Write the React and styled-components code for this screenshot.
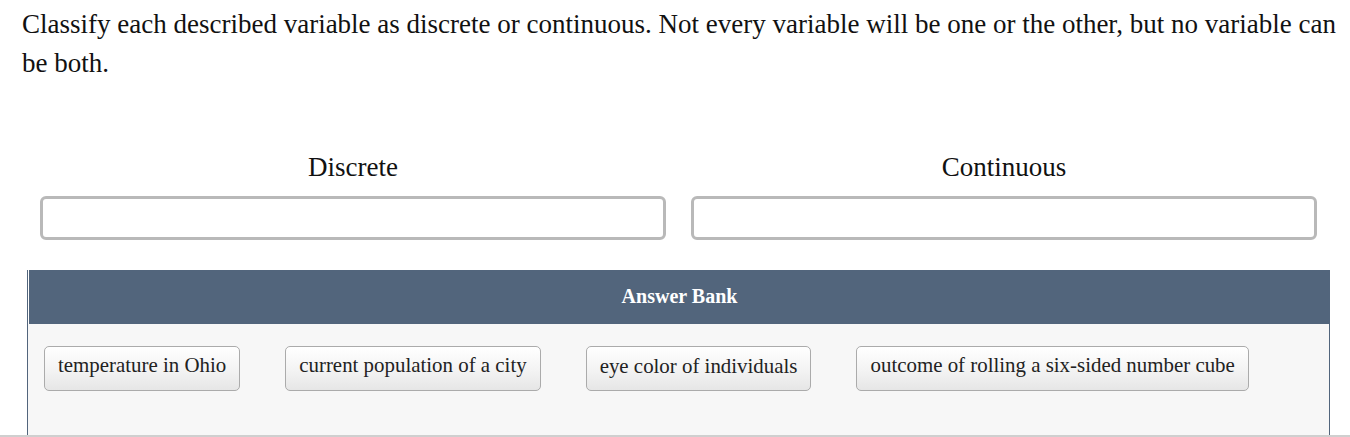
import React from "react";
import styled, { createGlobalStyle } from "styled-components";

const Global = createGlobalStyle`
  html, body { margin: 0; padding: 0; background: #fff; }
  body { font-family: "Liberation Serif", "Times New Roman", serif; color: #111; }
`;

const Page = styled.div`
  width: 1350px;
  height: 437px;
  overflow: hidden;
  display: flex;
  flex-direction: column;
`;

const Prompt = styled.p`
  margin: 5px 0 0 22px;
  width: 1320px;
  font-size: 27px;
  line-height: 38.5px;
`;

const Columns = styled.div`
  display: grid;
  grid-template-columns: 1fr 1fr;
  column-gap: 25px;
  margin: 71px 0 0 40px;
  width: 1277px;
`;

const Column = styled.div`
  display: flex;
  flex-direction: column;
  align-items: stretch;
`;

const ColumnTitle = styled.div`
  text-align: center;
  font-size: 27px;
  line-height: 28px;
  margin-bottom: 15px;
`;

const DropZone = styled.div`
  box-sizing: border-box;
  height: 44px;
  border: 3px solid #b9b9b9;
  border-radius: 6px;
  background: #fff;
`;

const Bank = styled.section`
  margin: 30px 0 0 27px;
  width: 1303px;
  box-sizing: border-box;
  border-left: 1px solid #52657c;
  border-right: 1px solid #52657c;
  display: flex;
  flex-direction: column;
`;

const BankHeader = styled.div`
  height: 54px;
  box-sizing: border-box;
  padding-bottom: 2px;
  margin: 0 -1px 0 1px;
  background: #52657c;
  color: #fff;
  font-weight: bold;
  font-size: 20px;
  display: flex;
  align-items: center;
  justify-content: center;
`;

const BankBody = styled.div`
  height: 111px;
  box-sizing: border-box;
  background: #f7f7f7;
  padding: 22px 0 0 16px;
  display: flex;
  align-items: flex-start;
  gap: 45px;
`;

const Chip = styled.div`
  box-sizing: border-box;
  height: 45px;
  padding: 0 13px;
  padding-bottom: ${(p) => (p.$low ? 4 : 6)}px;
  border: 1px solid #ababab;
  border-radius: 5px;
  background: linear-gradient(to bottom, #ffffff 0%, #f3f3f3 55%, #e6e6e6 100%);
  font-size: 20.9px;
  color: #222;
  display: flex;
  align-items: center;
  white-space: nowrap;
`;

const BottomRule = styled.div`
  height: 2px;
  background: #cfcfcf;
`;

export default function App() {
  const answers = [
    "temperature in Ohio",
    "current population of a city",
    "eye color of individuals",
    "outcome of rolling a six-sided number cube",
  ];
  return (
    <>
      <Global />
      <Page>
        <Prompt>
          Classify each described variable as discrete or continuous. Not every variable will be one or the other, but no variable can be both.
        </Prompt>
        <Columns>
          <Column>
            <ColumnTitle>Discrete</ColumnTitle>
            <DropZone />
          </Column>
          <Column>
            <ColumnTitle>Continuous</ColumnTitle>
            <DropZone />
          </Column>
        </Columns>
        <Bank>
          <BankHeader>Answer Bank</BankHeader>
          <BankBody>
            {answers.map((a, i) => (
              <Chip key={a} $low={i === 2}>{a}</Chip>
            ))}
          </BankBody>
        </Bank>
        <BottomRule />
      </Page>
    </>
  );
}
